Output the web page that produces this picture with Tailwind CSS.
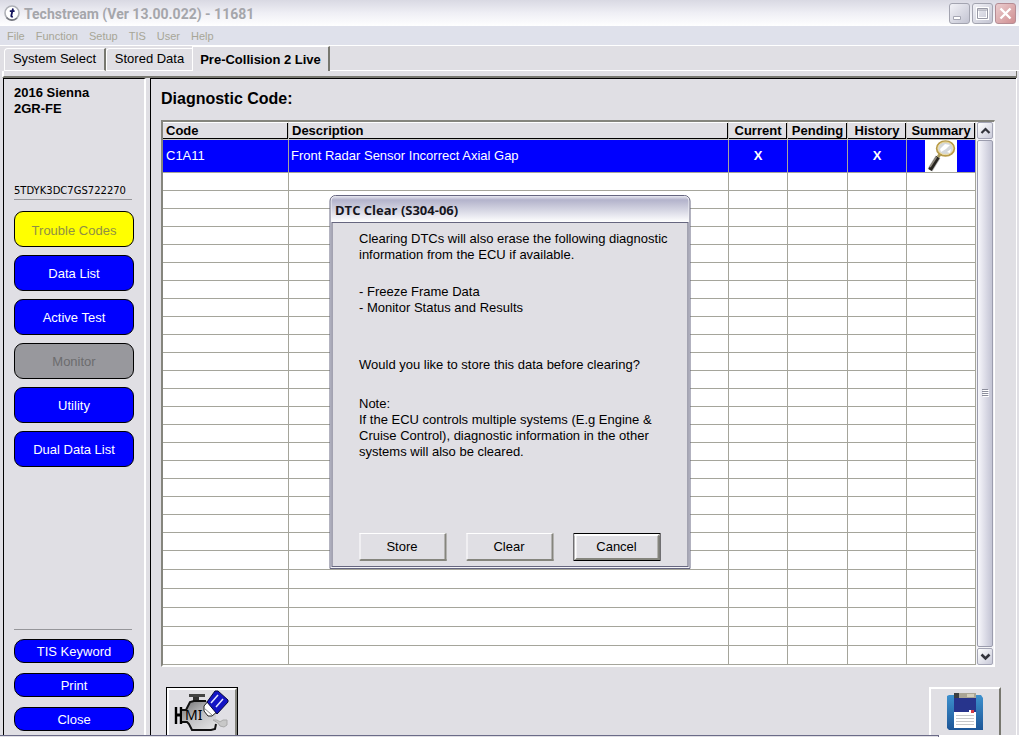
<!DOCTYPE html>
<html lang="en">
<head>
<meta charset="utf-8">
<meta name="viewport" content="width=device-width, initial-scale=1">
<title>Techstream (Ver 13.00.022) - 11681</title>
<script src="https://cdn.jsdelivr.net/npm/@tailwindcss/browser@4"></script>
</head>
<body class="relative flex min-h-screen flex-col overflow-x-hidden bg-[#e0dfe4] font-['Liberation_Sans',Arial,sans-serif] text-[13px] leading-4 text-black">

<!-- Title bar -->
<header class="flex h-[26px] shrink-0 items-center gap-1 bg-linear-to-b from-[#d9d9e3] via-[#efeff5] to-white pr-[3px] pl-1">
  <svg class="size-4 shrink-0" viewBox="0 0 16 16" aria-hidden="true">
    <circle cx="8" cy="8" r="7" fill="#fff" stroke="#aeb0b6" stroke-width="1.6"/>
    <path d="M2.500 12.500A7 7 0 0 0 13 13" fill="none" stroke="#777980" stroke-width="1.6"/>
    <path d="M9 3.500 7.300 10.600q-.2 1.500 1.600 1M5.800 6.200h4.800" fill="none" stroke="#14145c" stroke-width="1.800"/>
  </svg>
  <h1 class="grow pt-[2px] font-[Roboto,sans-serif] text-[14px] font-bold text-[#a5a6ab]">Techstream (Ver 13.00.022) - 11681</h1>
  <div class="flex gap-[2px]">
    <button aria-label="Minimize" class="size-[21px] rounded-[3px] border border-[#a3a4b0] bg-linear-to-br from-[#f2f2f7] to-[#c3c4d2]">
      <svg viewBox="0 0 19 19"><path d="M3.500 12.500h7v3h-7z" fill="#fff" stroke="#a5a6b3"/></svg>
    </button>
    <button aria-label="Maximize" class="size-[21px] rounded-[3px] border border-[#a3a4b0] bg-linear-to-br from-[#f2f2f7] to-[#c3c4d2]">
      <svg viewBox="0 0 19 19"><path d="M4.500 4.500h10v10h-10z" fill="none" stroke="#fff" stroke-width="3"/><path d="M4.500 4.500h10v10h-10zM4.500 6h10" fill="none" stroke="#9899a6"/></svg>
    </button>
    <button aria-label="Close window" class="size-[21px] rounded-[3px] border border-[#b58c94] bg-linear-to-br from-[#eacdcf] to-[#cf8f92]">
      <svg viewBox="0 0 19 19"><path d="m4.500 4.500 10 10m0-10-10 10" fill="none" stroke="#fff" stroke-width="2.400"/></svg>
    </button>
  </div>
</header>

<!-- Menu -->
<nav class="flex h-5 shrink-0 items-center gap-[11px] border-b border-white bg-[#dfe1eb] px-[7px] text-[11px] text-[#a7a697]">
  <a href="#">File</a><a href="#">Function</a><a href="#">Setup</a><a href="#">TIS</a><a href="#">User</a><a href="#">Help</a>
</nav>

<!-- Tabs -->
<div role="tablist" class="flex h-[25px] shrink-0 items-end pl-1">
  <div class="flex h-full items-end">
    <button role="tab" class="h-[23px] w-[102px] rounded-tl-sm border-t border-r-2 border-b border-l border-t-white border-r-[#77776f] border-b-white border-l-white pb-[2px]">System Select</button>
    <button role="tab" class="h-[23px] w-[86px] rounded-tl-sm border-t border-b border-l border-white pb-[2px]">Stored Data</button>
  </div>
  <button role="tab" aria-selected="true" class="h-[25px] w-[138px] border-t border-r-2 border-l border-t-white border-r-[#77776f] border-l-white pt-px font-bold">Pre-Collision 2 Live</button>
  <div class="grow self-end border-b border-white"></div>
</div>
<div class="mr-[2px] ml-[2px] h-[7px] shrink-0 border-r border-b-2 border-l-2 border-r-[#77776f] border-b-[#77776f] border-l-white"></div>

<main class="mr-[2px] ml-[3px] flex grow border-r border-white">
  <!-- Sidebar -->
  <aside class="flex w-[143px] shrink-0 flex-col border-t border-r-2 border-l border-t-black border-r-white border-l-black px-[10px] pt-[6px]">
    <p class="font-bold">2016 Sienna<br>2GR-FE</p>
    <p class="mt-[66px] font-['DejaVu_Sans',sans-serif] text-[10px]">5TDYK3DC7GS722270</p>
    <hr class="mr-[2px] border-[#96969a]">
    <div class="mt-[11px] flex flex-col gap-2">
      <button class="h-9 rounded-[9px] border border-black bg-[#ffff00] pt-[3px] text-[#8f8f45]">Trouble Codes</button>
      <button class="h-9 rounded-[9px] border border-black bg-[#0000ff] pt-[2px] text-white">Data List</button>
      <button class="h-9 rounded-[9px] border border-black bg-[#0000ff] pt-[2px] text-white">Active Test</button>
      <button disabled class="h-9 rounded-[9px] border border-black bg-[#98989d] pt-[2px] text-[#6c6c6e]">Monitor</button>
      <button class="h-9 rounded-[9px] border border-black bg-[#0000ff] pt-[2px] text-white">Utility</button>
      <button class="h-9 rounded-[9px] border border-black bg-[#0000ff] pt-[2px] text-white">Dual Data List</button>
    </div>
    <hr class="mt-auto mr-[2px] border-[#96969a]">
    <div class="mt-[9px] mb-1 flex flex-col gap-[10px]">
      <button class="h-6 rounded-[10px] border border-black bg-[#0000ff] pt-[2px] text-white">TIS Keyword</button>
      <button class="h-6 rounded-[10px] border border-black bg-[#0000ff] pt-[2px] text-white">Print</button>
      <button class="h-6 rounded-[10px] border border-black bg-[#0000ff] pt-[2px] text-white">Close</button>
    </div>
  </aside>

  <!-- Diagnostic codes -->
  <section class="ml-1 flex min-w-0 grow flex-col border-t border-l border-black pr-[21px] pl-[10px]">
    <h2 class="pt-[10px] pb-[11px] text-[16px] leading-5 font-bold">Diagnostic Code:</h2>
    <div class="flex border-t-2 border-r border-b-2 border-l-2 border-t-[#85857d] border-r-white border-b-white border-l-[#85857d]">
      <table class="grow table-fixed border-separate border-spacing-0 bg-white">
        <colgroup><col class="w-[126px]"><col><col class="w-[59px]"><col class="w-[60px]"><col class="w-[59px]"><col class="w-[69px]"></colgroup>
        <thead>
          <tr class="h-[18px] bg-[#e0dfe4] [&>th]:border-t [&>th]:border-r [&>th]:border-b [&>th]:border-t-white [&>th]:border-r-[#c8c8c4] [&>th]:border-b-[#c8c8c4] [&>th]:p-0 [&>th]:leading-4 [&>th]:shadow-[inset_-1px_-1px_0_#000]">
            <th class="text-left"><span class="pl-[3px]">Code</span></th><th class="text-left"><span class="pl-[3px]">Description</span></th><th>Current</th><th>Pending</th><th>History</th><th>Summary</th>
          </tr>
        </thead>
        <tbody id="rows" class="[&_td]:border-r [&_td]:border-b [&_td]:border-[#a5a59b] [&_td]:p-0">
          <tr class="h-[33px] bg-[#0000ff] text-white">
            <td><span class="pl-[3px]">C1A11</span></td><td><span class="pl-[2px]">Front Radar Sensor Incorrect Axial Gap</span></td>
            <td class="text-center font-bold">X</td><td></td><td class="text-center font-bold">X</td>
            <td>
              <svg class="ml-[18px] block size-8 bg-white" viewBox="0 0 32 32" role="img" aria-label="Summary">
                <path d="M13 17 5 30" stroke="#b5b5b5" stroke-width="5.500"/>
                <path d="M13 17 5 30" stroke="#26241f" stroke-width="4"/>
                <path d="m11.500 17-6.500 10" stroke="#8f8a80" stroke-width="1.500"/>
                <path d="m16 13-3 4" stroke="#a89a60" stroke-width="3"/>
                <ellipse cx="20.500" cy="8.500" rx="8.700" ry="7.300" fill="#d5d8da" stroke="#b89b49" stroke-width="2"/>
                <ellipse cx="20.500" cy="8.300" rx="7.600" ry="6.300" fill="none" stroke="#f0dfa6"/>
                <path d="m15 9 5-5 5 1-4 4-5 3zM22 12l4-3-1 4z" fill="#fff"/>
              </svg>
            </td>
          </tr>
        </tbody>
      </table>
      <!-- Scroll bar -->
      <div class="flex w-[18px] shrink-0 flex-col bg-[#f4f4f7] px-px">
        <button aria-label="Scroll up" class="h-[17px] rounded-[2px] border border-[#a4a5b5] bg-linear-to-br from-white to-[#c9cad9]">
          <svg class="m-auto size-[11px]" viewBox="0 0 11 11"><path d="M1.500 8 5.500 4l4 4" fill="none" stroke="#33343c" stroke-width="2.200"/></svg>
        </button>
        <div class="my-px flex grow flex-col items-center justify-center rounded-[2px] border border-[#9b9cad] bg-linear-to-r from-[#f7f7fb] via-[#dddde8] to-[#c3c4d4]">
          <svg class="mb-[2px] h-2 w-[7px]" viewBox="0 0 7 8"><path d="M0 .5h6M0 2.500h6M0 4.500h6M0 6.500h6" stroke="#8c8e9c"/><path d="M1 1.500h6M1 3.500h6M1 5.500h6M1 7.500h6" stroke="#fff"/></svg>
        </div>
        <button aria-label="Scroll down" class="h-[17px] rounded-[2px] border border-[#a4a5b5] bg-linear-to-br from-white to-[#c9cad9]">
          <svg class="m-auto size-[11px]" viewBox="0 0 11 11"><path d="m1.500 3.500 4 4 4-4" fill="none" stroke="#33343c" stroke-width="2.600"/></svg>
        </button>
      </div>
    </div>
    <div class="mt-auto flex justify-between pt-5 pl-[5px]">
      <button aria-label="Clear trouble codes" class="h-12 w-[72px] border-t border-r border-l border-black">
        <span class="block h-full border-t-2 border-r-2 border-l-2 border-t-white border-r-[#85857d] border-l-white">
          <svg class="ml-[5px] h-[44px] w-[60px]" viewBox="0 0 60 44">
            <defs><linearGradient id="metal" x1="0" y1="0" x2="1" y2="1"><stop offset="0" stop-color="#6e6e70"/><stop offset=".45" stop-color="#c2c2c4"/><stop offset="1" stop-color="#f0f0f0"/></linearGradient></defs>
            <path d="M2 17v17M7 17v17" stroke="#000" stroke-width="2.400"/><path d="M2 25h6" stroke="#000" stroke-width="3"/>
            <path d="M15 4h16v3H15z" fill="#444"/><path d="M19 7h6v4h-6z" fill="#333"/>
            <path d="M8 20h4l4-8 4-1h14l8 10v9h10l1 2-1 4h-5l-2-1-3 5H18l-5-8H8z" fill="url(#metal)"/>
            <path d="M8 20h4l4-8 4-1h12M8 32h5l2 2 3 6h19l4-1 1-5" fill="none" stroke="#111" stroke-width="2"/>
            <path d="M39 30h4l3 2 3-2h4v5l-3 2-4-1-2-3z" fill="#c8c8c8" stroke="#aaa"/>
            <text x="11" y="30" font-family="Noto Sans, sans-serif" font-size="14" fill="#000">MI</text>
            <path d="M30 16 36 9l8 12-6 5h-4l-4-5z" fill="#fff" stroke="#222"/>
            <path d="M30 18l8 7" stroke="#888"/>
            <path d="M41 1h3l10 9v2L43 24 33 12z" fill="#1414c4" stroke="#06063a"/>
            <path d="m37 13 7-8M42 17l7-8" stroke="#e5e6ff" stroke-width="1.500"/>
          </svg>
        </span>
      </button>
      <button aria-label="Save" class="-mr-[6px] h-12 w-[72px] border-t-2 border-r-2 border-l-2 border-t-white border-r-[#77776f] border-l-white">
        <svg class="mx-auto h-[38px] w-9" viewBox="0 0 36 38">
          <defs><linearGradient id="disk" x2="0" y2="1"><stop offset="0" stop-color="#3e93d0"/><stop offset="1" stop-color="#1d5697"/></linearGradient></defs>
          <path d="M2 2h5l1-1h20l1 1h5l2 3v32H2l-2-2V3z" fill="url(#disk)"/>
          <path d="M7 5h22v15H7z" fill="#27348c"/><path d="M7 0h22v5H7z" fill="#aaa596"/><path d="M7 0h5v5H7z" fill="#3c3f42"/><path d="M20 1h7v3h-7z" fill="#d2cdbb"/>
          <path d="M7 19h22v16H7z" fill="#fff"/><path d="M9 22.500h18M9 25.500h18M9 28.500h18M9 31.500h18" stroke="#c6c8ca"/>
          <path d="M22 17h5v3h-5z" fill="#fff"/><path d="M24 17h3v3h-3z" fill="#d23c46"/>
        </svg>
      </button>
    </div>
  </section>
</main>
<footer class="flex h-[3px] shrink-0 bg-white"><div class="mr-20 h-[2px] grow border-t border-r border-[#6b6b88] bg-[#e0dfe4]"></div></footer>

<!-- Dialog, over the table -->
<div role="dialog" aria-labelledby="dlg" class="absolute top-[195px] left-1/2 w-[361px] -translate-x-1/2 rounded-t-[6px] border border-[#666680] bg-[#f4f4f8] px-px pb-px">
  <h2 id="dlg" class="h-[26px] rounded-t-[5px] bg-linear-to-b from-[#e8e8f0] via-[#b3b3cb] via-15% to-white pt-[6px] pl-1 font-['Open_Sans',sans-serif] text-[13px] leading-4 font-bold text-[#16161e]">DTC Clear (S304-06)</h2>
  <div class="border border-[#66667f] bg-[#e0dfe4] px-[27px] pt-2 pb-[5px] whitespace-nowrap">
    <p>Clearing DTCs will also erase the following diagnostic<br>information from the ECU if available.</p>
    <p class="mt-[21px]">- Freeze Frame Data<br>- Monitor Status and Results</p>
    <p class="mt-[41px]">Would you like to store this data before clearing?</p>
    <p class="mt-[23px]">Note:<br>If the ECU controls multiple systems (E.g Engine &amp;<br>Cruise Control), diagnostic information in the other<br>systems will also be cleared.</p>
    <div class="mt-[73px] flex justify-between">
      <button class="h-7 w-[87px] border-t border-r-2 border-b-2 border-l border-t-white border-r-[#85857d] border-b-[#85857d] border-l-white">Store</button>
      <button class="h-7 w-[87px] border-t border-r-2 border-b-2 border-l border-t-white border-r-[#85857d] border-b-[#85857d] border-l-white">Clear</button>
      <button class="h-7 w-[87px] border border-black"><span class="block border-t-2 border-r-2 border-b-2 border-l-2 border-t-white border-r-[#85857d] border-b-[#85857d] border-l-white py-[3px]">Cancel</span></button>
    </div>
  </div>
</div>

<script>
  // Empty rows below the listed codes
  const body = document.getElementById('rows');
  for (let i = 0; i < 27; i++) {
    const tr = document.createElement('tr');
    tr.className = i < 21 ? 'h-[18px]' : 'h-[19px]';
    for (let c = 0; c < 6; c++) tr.appendChild(document.createElement('td'));
    body.appendChild(tr);
  }
</script>
</body>
</html>
